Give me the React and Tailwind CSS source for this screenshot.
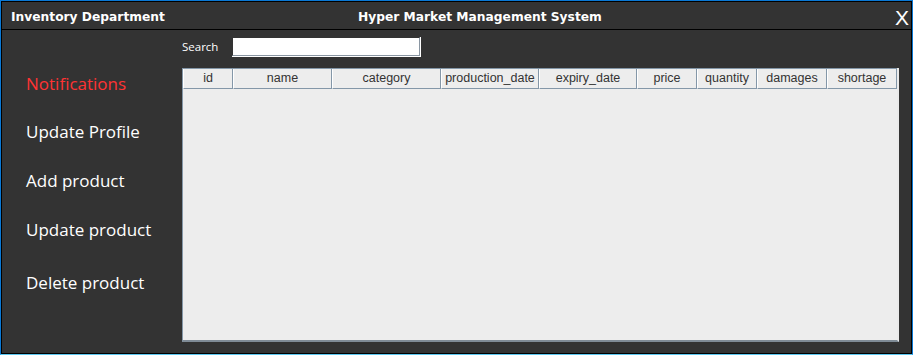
import React from "react";

const columns = [
  { key: "id", w: "w-[50px]" },
  { key: "name", w: "w-[99px]" },
  { key: "category", w: "w-[109px]" },
  { key: "production_date", w: "w-[98px]" },
  { key: "expiry_date", w: "w-[98px]" },
  { key: "price", w: "w-[60px]" },
  { key: "quantity", w: "w-[60px]" },
  { key: "damages", w: "w-[70px]" },
  { key: "shortage", w: "w-[70px]" },
];

const menu = [
  { label: "Notifications", active: true, cls: "h-[48px]" },
  { label: "Update Profile", cls: "h-[49px]" },
  { label: "Add product", cls: "h-[49px]" },
  { label: "Update product", cls: "h-[53px]" },
  { label: "Delete product", cls: "h-[48px]" },
];

const App = () => {
  return (
    <div className="w-[913px] h-[355px] border-x border-t border-b border-x-[#0a78d4] border-t-[#0a78d4] border-b-[#5cc8f2] bg-black">
      <div className="h-full border border-black bg-[#333333] flex flex-col font-['Tahoma','DejaVu_Sans',sans-serif]">
        {/* title bar */}
        <div className="h-[28px] shrink-0 border-b border-black flex items-center relative text-white pt-[3px]">
          <span className="pl-[9px] text-[12.25px] font-bold">Inventory Department</span>
          <span className="absolute left-[356px] top-[9px] text-[12.25px] font-bold leading-none">Hyper Market Management System</span>
          <span className="ml-auto pr-[2px] text-[21px] font-['Liberation_Sans',sans-serif] leading-none">X</span>
        </div>

        <div className="flex flex-1">
          {/* sidebar */}
          <div className="w-[180px] shrink-0 pt-[41px] pl-[24px] flex flex-col">
            {menu.map((m) => (
              <div
                key={m.label}
                className={`${m.cls} text-[17px] font-['Open_Sans',sans-serif] ${m.active ? "text-[#ff3333]" : "text-white"}`}
              >
                {m.label}
              </div>
            ))}
          </div>

          {/* main */}
          <div className="flex flex-col pt-[7px]">
            <div className="h-[20px] flex items-center">
              <span className="w-[50px] text-white text-[11.5px] font-['Open_Sans',sans-serif] -mt-[1px]">Search</span>
              <div className="border-r border-b border-white">
                <input className="block w-[188px] h-[19px] bg-white border border-t-[#333] border-l-[#333] border-r-[#8a96a2] border-b-[#8a96a2] outline-none" />
              </div>
            </div>
            <div className="mt-[11px] w-[717px] h-[274px] bg-[#ededed] border-l border-l-[#8497a8] border-b-2 border-b-[#7f8b96] border-r-2 border-r-[#eaeaea] flex flex-col">
              <div className="flex h-[21px] bg-[#ededed] border-t border-t-[#8497a8] font-['Liberation_Sans',sans-serif] text-[12.5px] text-[#333]">
                {columns.map((c) => (
                  <div
                    key={c.key}
                    className={`${c.w} shrink-0 overflow-hidden whitespace-nowrap flex items-center justify-center border-r border-b border-[#8497a8] border-l border-l-white`}
                  >
                    {c.key}
                  </div>
                ))}
              </div>
              <div className="flex-1 bg-[#ededed]" />
            </div>
          </div>
        </div>
      </div>
    </div>
  );
};

export default App;
